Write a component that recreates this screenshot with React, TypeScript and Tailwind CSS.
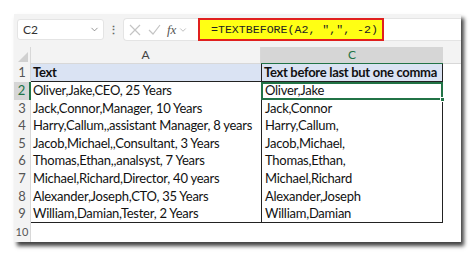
import { ChevronDown } from 'lucide-react';

const rows = [
  ['Oliver,Jake,CEO, 25 Years', 'Oliver,Jake'],
  ['Jack,Connor,Manager, 10 Years', 'Jack,Connor'],
  ['Harry,Callum,,assistant Manager, 8 years', 'Harry,Callum,'],
  ['Jacob,Michael,,Consultant, 3 Years', 'Jacob,Michael,'],
  ['Thomas,Ethan,,analsyst, 7 Years', 'Thomas,Ethan,'],
  ['Michael,Richard,Director, 40 years', 'Michael,Richard'],
  ['Alexander,Joseph,CTO, 35 Years', 'Alexander,Joseph'],
  ['William,Damian,Tester, 2 Years', 'William,Damian'],
];

const cellFont = { fontFamily: 'Lato, "Open Sans", sans-serif' };

export default function App() {
  return (
    <div className="w-[474px] h-[257px] bg-white pt-[14px] pl-[14px]" style={cellFont}>
      <div className="w-[447px] h-[228px] bg-white flex flex-col shadow-[3px_4px_4px_rgba(0,0,0,0.75)] overflow-hidden">
        {/* formula bar */}
        <div className="h-[33px] bg-[#f3f3f3] flex items-center pl-[3px] pb-[2px]">
          <div className="w-[87px] h-[21px] bg-white rounded-[3px] border border-[#e4e4e4] flex items-center justify-between pl-[5px] pr-[3px] text-[12px] text-[#333]">
            <span>C2</span>
            <ChevronDown className="w-[11px] h-[11px] text-[#666]" strokeWidth={1.5} />
          </div>
          <div className="w-[19px] flex justify-center text-[#666] text-[11px] leading-none font-bold">⋮</div>
          <div className="flex-1 h-[23px] bg-white rounded-l-[4px] border border-[#e4e4e4] border-r-0 flex items-center">
            <div className="w-[74px] flex items-center pl-[5px] gap-[7px] text-[#c4c4c4]">
              <svg width="12" height="12" viewBox="0 0 12 12" fill="none" stroke="currentColor" strokeWidth="1.2">
                <path d="M1 1l10 10M11 1L1 11" />
              </svg>
              <svg width="13" height="11" viewBox="0 0 13 11" fill="none" stroke="currentColor" strokeWidth="1.2">
                <path d="M1 6l4 4 7-9" />
              </svg>
              <span className="text-[#555] italic text-[13px] leading-none -ml-[1px]" style={{ fontFamily: '"Liberation Serif", serif' }}>
                fx
              </span>
              <ChevronDown className="w-[10px] h-[10px] -ml-[5px] text-[#999]" strokeWidth={1.5} />
            </div>
            <div className="w-[186px] h-[23px] bg-[#ffff14] border-2 border-[#e0201e] flex items-center pl-[11px] text-[11.6px] text-[#222]" style={{ fontFamily: '"Liberation Mono", monospace' }}>
              =TEXTBEFORE(A2, ",", -2)
            </div>
          </div>
        </div>

        {/* column headers */}
        <div className="h-[17px] flex bg-[#f3f3f3] text-[12px] text-[#444]">
          <div className="w-[17px] relative border-r border-[#d8d8d8]">
            <svg className="absolute right-[2px] bottom-[2px]" width="10" height="10" viewBox="0 0 10 10">
              <path d="M10 0V10H0Z" fill="#d0d0d0" />
            </svg>
          </div>
          <div className="w-[230px] flex items-center justify-center border-r border-[#d8d8d8] border-b border-b-[#d8d8d8]">A</div>
          <div className="w-[182px] flex items-center justify-center bg-[#d6d6d6] text-[#217346] border-b border-[#217346]">C</div>
          <div className="flex-1 border-b border-[#d8d8d8]" />
        </div>

        {/* row 1 */}
        <div className="h-[18px] flex text-[13px] tracking-[-0.3px] whitespace-nowrap text-[#111]">
          <div className="w-[17px] bg-[#f3f3f3] border-r border-[#d8d8d8] flex items-center justify-center text-[#555] tracking-normal">1</div>
          <div className="w-[230px] bg-[#dae3f3] border-b border-[#222] font-bold flex items-center pl-[2px]">Text</div>
          <div className="w-[182px] bg-[#dae3f3] border-b border-x border-[#222] font-bold flex items-center pl-[2px]">
            Text before last but one comma
          </div>
          <div className="flex-1" />
        </div>

        {rows.map(([a, c], i) => {
          const selected = i === 0;
          const last = i === rows.length - 1;
          return (
            <div key={i} className="h-[17.6px] flex text-[13px] tracking-[-0.25px] whitespace-nowrap text-[#111]">
              <div
                className={
                  selected
                    ? 'w-[17px] bg-[#d6d6d6] border-r-2 border-[#217346] flex items-center justify-center text-[#217346] tracking-normal'
                    : 'w-[17px] bg-[#f3f3f3] border-r border-[#d8d8d8] flex items-center justify-center text-[#555] tracking-normal'
                }
              >
                {i + 2}
              </div>
              <div className={last ? 'w-[230px] flex items-center pl-[2px] border-b border-[#222]' : 'w-[230px] flex items-center pl-[2px]'}>
                {a}
              </div>
              <div
                className={
                  selected
                    ? 'w-[182px] relative flex items-center pl-[2px] border-2 border-[#217346]'
                    : last
                      ? 'w-[182px] flex items-center pl-[3px] border-x border-b border-[#222]'
                      : 'w-[182px] flex items-center pl-[3px] border-x border-[#222]'
                }
              >
                {c}
                {selected && <div className="absolute -right-[4px] -bottom-[4px] w-[5px] h-[5px] bg-[#217346] border border-white" />}
              </div>
              <div className="flex-1" />
            </div>
          );
        })}

        {/* row 10 */}
        <div className="flex-1 flex text-[11px]">
          <div className="w-[17px] bg-[#f3f3f3] border-r border-[#d8d8d8] flex items-center justify-center text-[#555]">10</div>
          <div className="flex-1" />
        </div>
      </div>
    </div>
  );
}
